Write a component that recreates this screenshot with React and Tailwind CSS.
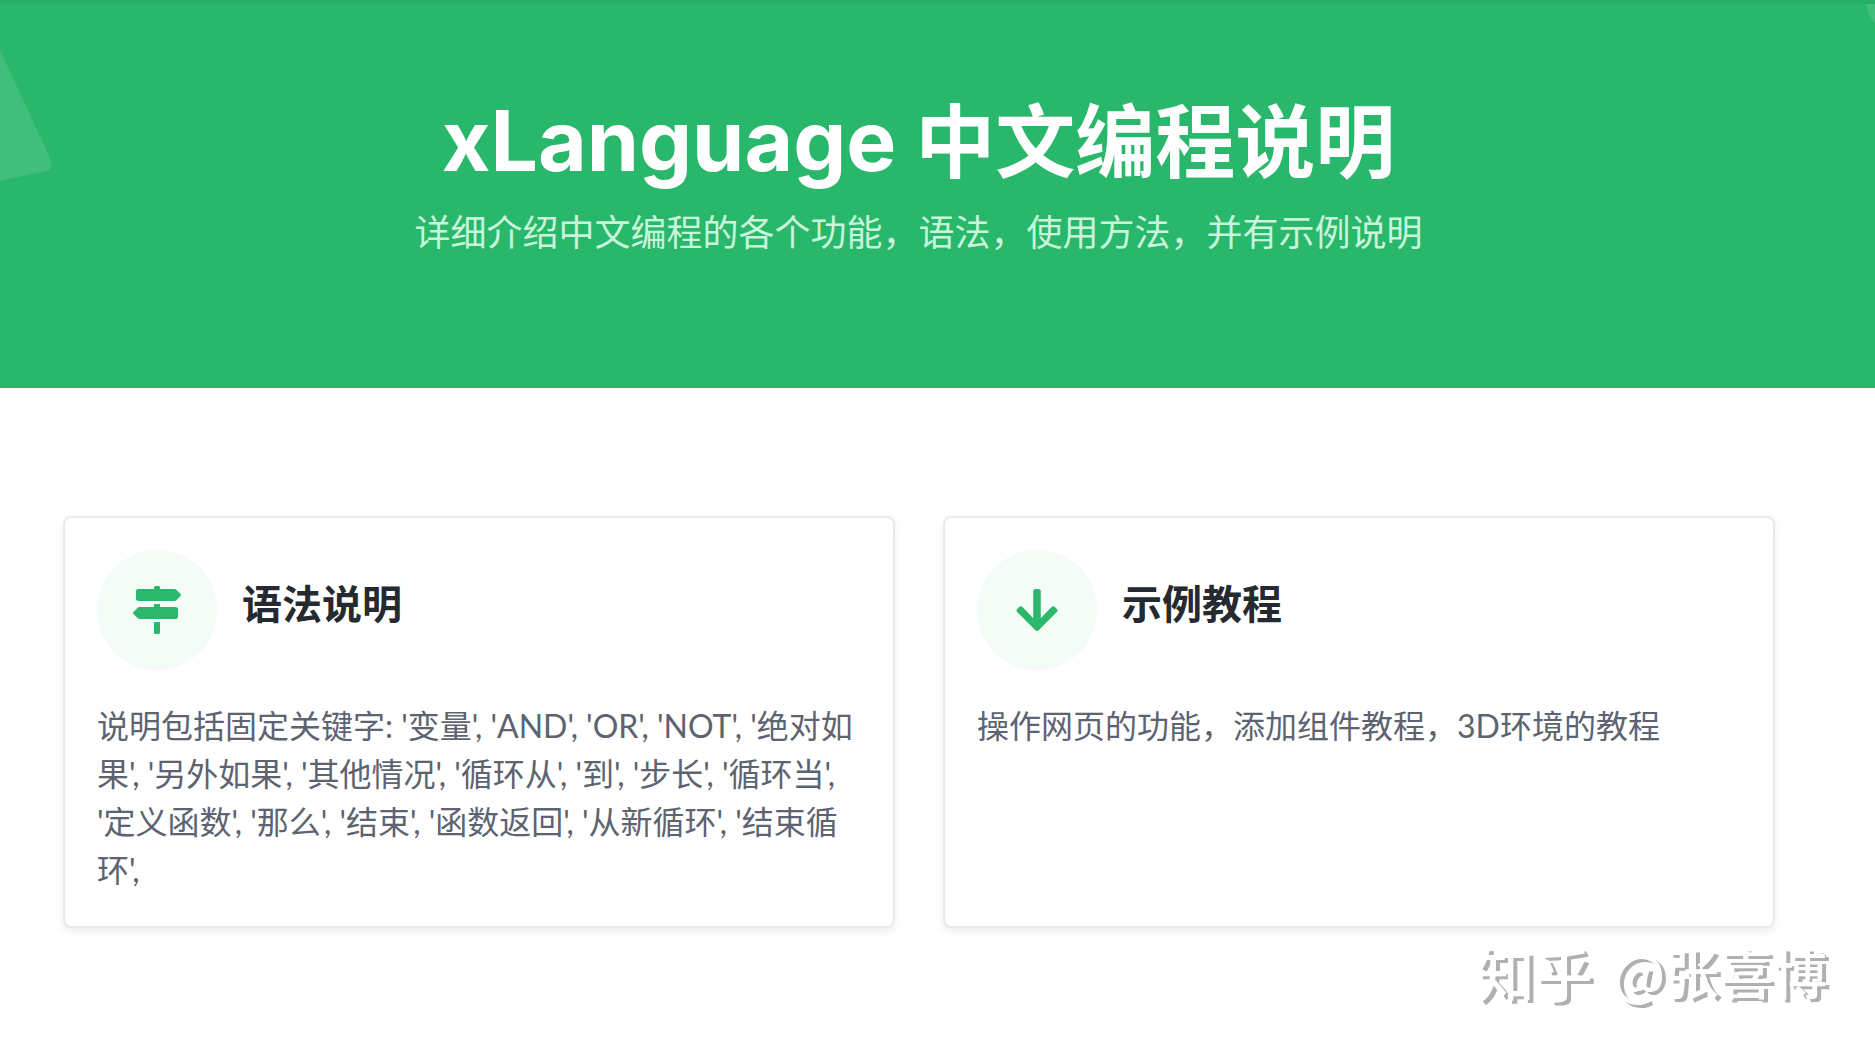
import { FaArrowDown, FaMapSigns } from "react-icons/fa";

const features = [
  {
    title: "语法说明",
    Icon: FaMapSigns,
    body: "说明包括固定关键字: '变量', 'AND', 'OR', 'NOT', '绝对如果', '另外如果', '其他情况', '循环从', '到', '步长', '循环当', '定义函数', '那么', '结束', '函数返回', '从新循环', '结束循环',",
  },
  {
    title: "示例教程",
    Icon: FaArrowDown,
    body: "操作网页的功能，添加组件教程，3D环境的教程",
  },
];

function Hero() {
  return (
    <header className="relative overflow-hidden border-t-4 border-[#27b067] bg-[#29b76b] pt-[87px] pb-32 pl-4 pr-[54px] text-center">
      <svg
        aria-hidden="true"
        className="absolute left-0 top-0 h-[200px] w-[60px]"
        viewBox="0 4 60 200"
      >
        <path d="M0 50 L50 158 Q54 169 46 171 L0 181 Z" fill="#fff" fillOpacity="0.11" />
      </svg>
      <svg
        aria-hidden="true"
        className="absolute right-0 top-0 h-[30px] w-[20px]"
        viewBox="0 4 20 30"
      >
        <path d="M10 0 Q12 14 20 24 V0 Z" fill="#fff" fillOpacity="0.11" />
      </svg>
      <h1 className="font-['Inter','Noto_Sans_CJK_SC',sans-serif] text-[80px] leading-[100px] font-bold text-white">
        <span className="text-[84px]">xLanguage</span> 中文编程说明
      </h1>
      <p className="mt-3 text-[36px] leading-[56px] text-[#c9f5da]">
        详细介绍中文编程的各个功能，语法，使用方法，并有示例说明
      </p>
    </header>
  );
}

function FeatureCard({ title, Icon, body }) {
  return (
    <article className="rounded-lg border-2 border-[#e9e9ea] bg-white p-8 shadow-[0_4px_8px_rgba(0,0,0,0.07)]">
      <div className="flex items-center gap-[25px]">
        <div className="flex size-[120px] shrink-0 items-center justify-center rounded-full bg-[#f3fcf6]">
          <Icon aria-hidden="true" className="size-12 text-[#2bb76c]" />
        </div>
        <h2 className="pb-3 text-[40px] leading-[48px] font-bold text-[#252930]">{title}</h2>
      </div>
      <p className="mt-8 text-[32px] leading-[48px] text-[#5d6370]">{body}</p>
    </article>
  );
}

export default function App() {
  return (
    <div className="relative min-h-screen bg-white font-['Lato','Noto_Sans_CJK_SC',sans-serif]">
      <Hero />
      <main className="grid grid-cols-2 gap-12 pt-32 pb-[124px] pl-[63px] pr-[100px]">
        {features.map((feature) => (
          <FeatureCard key={feature.title} {...feature} />
        ))}
      </main>
      <div className="absolute right-12 bottom-11 flex items-center gap-5 font-['Noto_Sans_CJK_SC',sans-serif] text-[54px] leading-[72px] font-medium text-white [text-shadow:4px_3px_0_#b0b0b0]">
        <span className="text-[58px]">知乎</span>
        <span>@张喜博</span>
      </div>
    </div>
  );
}
